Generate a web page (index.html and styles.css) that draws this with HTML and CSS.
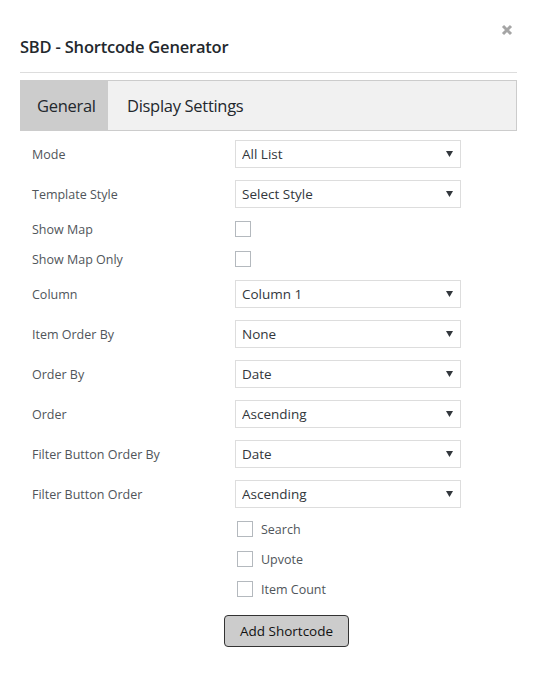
FILE: index.html
```html
<!DOCTYPE html>
<html lang="en">
<head>
    <meta charset="UTF-8">
    <meta name="viewport" content="width=device-width, initial-scale=1.0">
    <title>SBD - Shortcode Generator</title>
    <link rel="stylesheet" href="styles.css">
</head>
<body>
    <div class="modal">
        <span class="close">
            <svg width="12" height="12" viewBox="0 0 12 12"><path d="M2 2L10 10M10 2L2 10" stroke="#a5a5a5" stroke-width="3" stroke-linecap="butt"/></svg>
        </span>
        <h2 class="title">SBD - Shortcode Generator</h2>
        <hr class="divider">

        <div class="tabs">
            <div class="tab active">General</div>
            <div class="tab">Display Settings</div>
        </div>

        <div class="form">
            <div class="row">
                <label for="mode">Mode</label>
                <select id="mode"><option>All List</option></select>
            </div>
            <div class="row">
                <label for="style">Template Style</label>
                <select id="style"><option>Select Style</option></select>
            </div>
            <div class="row small">
                <label for="showMap">Show Map</label>
                <input type="checkbox" id="showMap">
            </div>
            <div class="row small">
                <label for="mapOnly">Show Map Only</label>
                <input type="checkbox" id="mapOnly">
            </div>
            <div class="row">
                <label for="column">Column</label>
                <select id="column"><option>Column 1</option></select>
            </div>
            <div class="row">
                <label for="itemOrderBy">Item Order By</label>
                <select id="itemOrderBy"><option>None</option></select>
            </div>
            <div class="row">
                <label for="orderBy">Order By</label>
                <select id="orderBy"><option>Date</option></select>
            </div>
            <div class="row">
                <label for="order">Order</label>
                <select id="order"><option>Ascending</option></select>
            </div>
            <div class="row">
                <label for="filterOrderBy">Filter Button Order By</label>
                <select id="filterOrderBy"><option>Date</option></select>
            </div>
            <div class="row">
                <label for="filterOrder">Filter Button Order</label>
                <select id="filterOrder"><option>Ascending</option></select>
            </div>

            <label class="check"><input type="checkbox"> Search</label>
            <label class="check"><input type="checkbox"> Upvote</label>
            <label class="check"><input type="checkbox"> Item Count</label>
        </div>

        <div class="actions">
            <button type="button">Add Shortcode</button>
        </div>
    </div>
</body>
</html>
```

FILE: styles.css
```css
body {
    margin: 0;
    background: #fff;
    font-family: "Open Sans", "Noto Sans", Arial, sans-serif;
    color: #32373c;
}
.modal {
    position: relative;
    width: 497px;
    padding: 35px 20px 20px 20px;
}
.close {
    position: absolute;
    top: 24px;
    right: 24px;
    line-height: 0;
}
.title {
    margin: 0;
    font-size: 16.5px;
    font-weight: 600;
    line-height: 24px;
    color: #23282d;
    letter-spacing: -0.2px;
}
.divider {
    margin: 13px 0 7px 0;
    border: 0;
    border-top: 1px solid #ddd;
}
.tabs {
    display: flex;
    height: 49px;
    background: #f1f1f1;
    border: 1px solid #ccc;
}
.tab {
    display: flex;
    align-items: center;
    padding: 0 18px 0 16px;
    font-size: 16.5px;
    color: #23282d;
    letter-spacing: -0.3px;
}
.tab.active {
    background: #ccc;
    width: 53px;
}
.tab + .tab {
    padding-left: 19px;
}
.form {
    margin-top: 3px;
}
.row {
    display: grid;
    grid-template-columns: 203px 226px;
    align-items: center;
    height: 40px;
    padding-left: 12px;
}
.row.small {
    height: 30px;
}
.row label {
    font-size: 12.5px;
    color: #50555a;
}
select {
    height: 28px;
    width: 226px;
    padding: 0 6px;
    border: 1px solid #ddd;
    background: #fff url("data:image/svg+xml;utf8,<svg xmlns='http://www.w3.org/2000/svg' width='7' height='6'><path d='M0 0h7L3.5 6z' fill='%2332373c'/></svg>") no-repeat right 7px center;
    -webkit-appearance: none;
    appearance: none;
    font-family: inherit;
    font-size: 13.5px;
    color: #32373c;
    border-radius: 0;
}
input[type="checkbox"] {
    -webkit-appearance: none;
    appearance: none;
    width: 16px;
    height: 16px;
    margin: 0;
    border: 1px solid #b4b9be;
    background: #fff;
}
.check {
    display: flex;
    align-items: center;
    gap: 8px;
    height: 30px;
    padding-left: 217px;
    font-size: 12.5px;
    color: #50555a;
}
.actions {
    padding-left: 204px;
    margin-top: 11px;
}
button {
    width: 125px;
    height: 32px;
    background: #ccc;
    border: 1px solid #333;
    border-radius: 4px;
    font-family: inherit;
    font-size: 13.5px;
    color: #111;
    cursor: pointer;
}
```
